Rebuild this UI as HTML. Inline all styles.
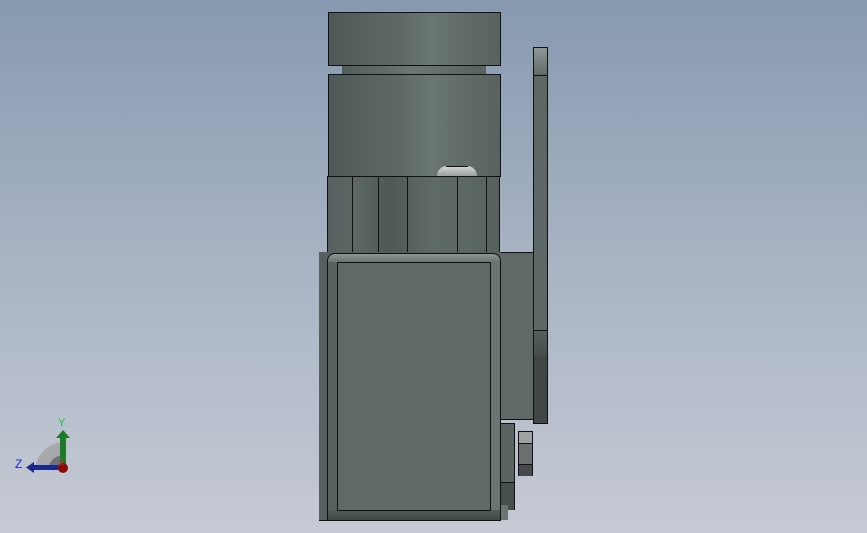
<!DOCTYPE html>
<html><head><style>
html,body{margin:0;padding:0}
body{width:867px;height:533px;position:relative;overflow:hidden;background:linear-gradient(180deg,#8799b0 0%,#a9b4c4 50%,#c6cad4 100%);font-family:"Liberation Sans",sans-serif}
.b{position:absolute;box-sizing:border-box;border:1px solid #111}
.cyl{background:linear-gradient(90deg,#4f5958 0%,#5d6867 40%,#6a7674 60%,#58625f 100%)}
</style></head><body>
<div class="b cyl" style="left:328px;top:12px;width:173px;height:54px"></div>
<div style="position:absolute;left:342px;top:66px;width:144px;height:8px;background:linear-gradient(90deg,#525c5b,#6b7675,#57615f)"></div>
<div class="b cyl" style="left:328px;top:74px;width:173px;height:103px"></div>
<div style="position:absolute;left:437px;top:166px;width:40px;height:10px;border-radius:20px 20px 0 0;background:linear-gradient(180deg,#d8dada,#9aa0a0)"></div>
<div style="position:absolute;left:446px;top:166px;width:22px;height:1px;background:#111"></div>
<div class="b" style="left:327px;top:176px;width:173px;height:77px;background:linear-gradient(90deg,#56605e,#5d6866 15%,#4e5857 35%,#5f6a68 60%,#5c6765 85%,#56605f)"></div>
<div style="position:absolute;left:352px;top:176px;width:1px;height:77px;background:#111"></div>
<div style="position:absolute;left:378px;top:176px;width:1px;height:77px;background:#111"></div>
<div style="position:absolute;left:407px;top:176px;width:1px;height:77px;background:#111"></div>
<div style="position:absolute;left:457px;top:176px;width:1px;height:77px;background:#111"></div>
<div style="position:absolute;left:486px;top:176px;width:1px;height:77px;background:#111"></div>
<!-- bracket -->
<div class="b" style="left:533px;top:47px;width:15px;height:377px;background:#5d6866"></div>
<div style="position:absolute;left:534px;top:48px;width:13px;height:27px;background:linear-gradient(180deg,#8e9a97,#5f6a68)"></div>
<div style="position:absolute;left:534px;top:75px;width:13px;height:1px;background:#111"></div>
<div style="position:absolute;left:534px;top:330px;width:13px;height:26px;background:linear-gradient(180deg,#56605f,#444c4b);border-top:1px solid #111;border-bottom:1px solid #111"></div>
<div style="position:absolute;left:534px;top:357px;width:13px;height:66px;background:#3f4645"></div>
<!-- right box -->
<div class="b" style="left:499px;top:252px;width:35px;height:168px;background:#5f6a68"></div>
<div class="b" style="left:499px;top:423px;width:16px;height:87px;background:#5a6463"></div>
<div style="position:absolute;left:500px;top:482px;width:14px;height:27px;background:#474f4e;border-top:1px solid #111"></div>
<div class="b" style="left:518px;top:431px;width:15px;height:45px;background:#6c6f70"></div>
<div style="position:absolute;left:519px;top:432px;width:13px;height:11px;background:#9fa2a3;border-bottom:1px solid #111"></div>
<div style="position:absolute;left:519px;top:464px;width:13px;height:11px;background:#474a4b;border-top:1px solid #111"></div>
<div style="position:absolute;left:499px;top:505px;width:9px;height:15px;background:#6a7472"></div>
<!-- main housing -->
<div class="b" style="left:319px;top:252px;width:182px;height:269px;background:#56605f;border-width:0 0 1px 0"></div>
<div class="b" style="left:327px;top:253px;width:174px;height:267px;border-radius:8px 8px 0 0;background:linear-gradient(180deg,#8d9896 0,#606b69 10px,#5f6a68 12px);"></div>
<div style="position:absolute;left:328px;top:262px;width:10px;height:248px;background:#56615f"></div>
<div style="position:absolute;left:490px;top:262px;width:10px;height:248px;background:#6a7573"></div>
<div style="position:absolute;left:328px;top:510px;width:172px;height:10px;background:linear-gradient(180deg,#525c5b,#3f4847)"></div>
<div class="b" style="left:337px;top:262px;width:154px;height:249px;background:#5f6a68"></div>
<!-- triad -->
<svg style="position:absolute;left:10px;top:410px" width="70" height="70" viewBox="0 0 70 70">
<path d="M25 60 A30 30 0 0 1 53 32 L53 60 Z" fill="#a7a9ad"/>
<path d="M38 60 A16 16 0 0 1 53 45 L53 60 Z" fill="#6f7276"/>
<rect x="50" y="26" width="6" height="32" fill="#1d7a2a"/>
<path d="M46 28 L53 20 L60 28 Z" fill="#1d7a2a"/>
<rect x="22" y="55" width="32" height="5" fill="#1a2a8a"/>
<path d="M24 52 L16 57.5 L24 63 Z" fill="#1a2a8a"/>
<circle cx="53" cy="58" r="5" fill="#8a0a0a"/>
<text x="48" y="16" font-size="11" fill="#1fc03a" font-family="Liberation Sans">Y</text>
<text x="5" y="58" font-size="12" fill="#1a2ad0" font-family="Liberation Sans">Z</text>
<text x="49" y="56" font-size="8" fill="#e02020" font-family="Liberation Sans">X</text>
</svg>
</body></html>
